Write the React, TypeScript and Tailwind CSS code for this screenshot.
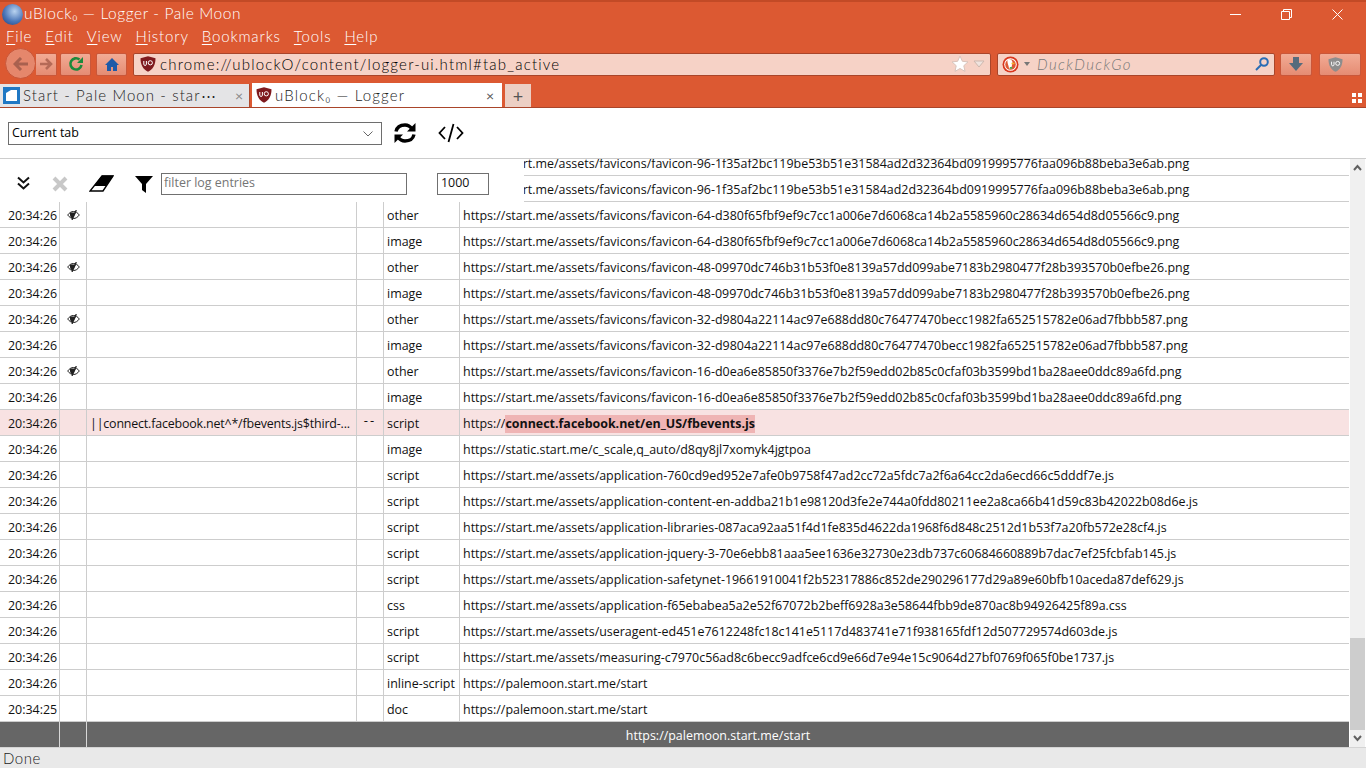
import React from "react";

const uiFont = "font-['Lato','Noto_Sans',sans-serif]";

const rows: [string, boolean, string, string, string][] = [
  ["20:34:26", false, "", "image", "https://start.me/assets/favicons/favicon-96-1f35af2bc119be53b51e31584ad2d32364bd0919995776faa096b88beba3e6ab.png"],
  ["20:34:26", false, "", "image", "https://start.me/assets/favicons/favicon-96-1f35af2bc119be53b51e31584ad2d32364bd0919995776faa096b88beba3e6ab.png"],
  ["20:34:26", true, "", "other", "https://start.me/assets/favicons/favicon-64-d380f65fbf9ef9c7cc1a006e7d6068ca14b2a5585960c28634d654d8d05566c9.png"],
  ["20:34:26", false, "", "image", "https://start.me/assets/favicons/favicon-64-d380f65fbf9ef9c7cc1a006e7d6068ca14b2a5585960c28634d654d8d05566c9.png"],
  ["20:34:26", true, "", "other", "https://start.me/assets/favicons/favicon-48-09970dc746b31b53f0e8139a57dd099abe7183b2980477f28b393570b0efbe26.png"],
  ["20:34:26", false, "", "image", "https://start.me/assets/favicons/favicon-48-09970dc746b31b53f0e8139a57dd099abe7183b2980477f28b393570b0efbe26.png"],
  ["20:34:26", true, "", "other", "https://start.me/assets/favicons/favicon-32-d9804a22114ac97e688dd80c76477470becc1982fa652515782e06ad7fbbb587.png"],
  ["20:34:26", false, "", "image", "https://start.me/assets/favicons/favicon-32-d9804a22114ac97e688dd80c76477470becc1982fa652515782e06ad7fbbb587.png"],
  ["20:34:26", true, "", "other", "https://start.me/assets/favicons/favicon-16-d0ea6e85850f3376e7b2f59edd02b85c0cfaf03b3599bd1ba28aee0ddc89a6fd.png"],
  ["20:34:26", false, "", "image", "https://start.me/assets/favicons/favicon-16-d0ea6e85850f3376e7b2f59edd02b85c0cfaf03b3599bd1ba28aee0ddc89a6fd.png"],
  ["20:34:26", false, "||connect.facebook.net^*/fbevents.js$third-...", "script", "BLOCK"],
  ["20:34:26", false, "", "image", "https://static.start.me/c_scale,q_auto/d8qy8jl7xomyk4jgtpoa"],
  ["20:34:26", false, "", "script", "https://start.me/assets/application-760cd9ed952e7afe0b9758f47ad2cc72a5fdc7a2f6a64cc2da6ecd66c5dddf7e.js"],
  ["20:34:26", false, "", "script", "https://start.me/assets/application-content-en-addba21b1e98120d3fe2e744a0fdd80211ee2a8ca66b41d59c83b42022b08d6e.js"],
  ["20:34:26", false, "", "script", "https://start.me/assets/application-libraries-087aca92aa51f4d1fe835d4622da1968f6d848c2512d1b53f7a20fb572e28cf4.js"],
  ["20:34:26", false, "", "script", "https://start.me/assets/application-jquery-3-70e6ebb81aaa5ee1636e32730e23db737c60684660889b7dac7ef25fcbfab145.js"],
  ["20:34:26", false, "", "script", "https://start.me/assets/application-safetynet-19661910041f2b52317886c852de290296177d29a89e60bfb10aceda87def629.js"],
  ["20:34:26", false, "", "css", "https://start.me/assets/application-f65ebabea5a2e52f67072b2beff6928a3e58644fbb9de870ac8b94926425f89a.css"],
  ["20:34:26", false, "", "script", "https://start.me/assets/useragent-ed451e7612248fc18c141e5117d483741e71f938165fdf12d507729574d603de.js"],
  ["20:34:26", false, "", "script", "https://start.me/assets/measuring-c7970c56ad8c6becc9adfce6cd9e66d7e94e15c9064d27bf0769f065f0be1737.js"],
  ["20:34:26", false, "", "inline-script", "https://palemoon.start.me/start"],
  ["20:34:25", false, "", "doc", "https://palemoon.start.me/start"],
];

function Shield({ size = 16, fill = "#7f1a1e" }: { size?: number; fill?: string }) {
  return (
    <svg width={size} height={size} viewBox="0 0 16 16" className="shrink-0">
      <path d="M8 .3 15.500 2.300C15.500 9 13 13.300 8 15.800 3 13.300.5 9 .5 2.300Z" fill={fill} />
      <path d="M3.800 5v3.200c0 1.700 2.600 1.700 2.600 0V5" fill="none" stroke="#fff" strokeWidth="1" />
      <circle cx="10.300" cy="6.800" r="2.100" fill="none" stroke="#fff" strokeWidth="1" />
    </svg>
  );
}

function Eye() {
  return (
    <svg width="13" height="10" viewBox="0 0 13 10">
      <path d="M.7 5C2.500 2.500 4.500 1.500 6.500 1.500s4 1 5.800 3.500C10.500 7.500 8.500 8.500 6.500 8.500S2.500 7.500.7 5Z" fill="none" stroke="#222" strokeWidth="1" />
      <path d="M3 2.500h6L5.500 8.500C4 8 3 6.500 3 5Z" fill="#222" />
      <path d="M9.300 0 5 10" stroke="#222" strokeWidth="1.300" />
    </svg>
  );
}

function Menu({ label }: { label: string }) {
  return (
    <span>
      <span className="underline underline-offset-2">{label[0]}</span>
      {label.slice(1)}
    </span>
  );
}

function NavButton({ className, children }: { className: string; children: React.ReactNode }) {
  return (
    <div className={`flex h-[23px] items-center justify-center rounded-[2px] border border-[#c9573a] bg-gradient-to-b from-[#f2ab95] to-[#e58c73] ${className}`}>
      {children}
    </div>
  );
}

function LogRow({ r }: { r: (typeof rows)[number] }) {
  const blocked = r[4] === "BLOCK";
  return (
    <div className={`flex h-[26px] shrink-0 items-center border-b border-[#cdcdcd] ${blocked ? "bg-[#f8e2e2]" : ""}`}>
      <div className="flex h-full w-[60px] shrink-0 items-center border-r border-[#cdcdcd] pt-[3px] pl-[8px]">{r[0]}</div>
      <div className="flex h-full w-[27px] shrink-0 items-center justify-center border-r border-[#cdcdcd]">{r[1] && <Eye />}</div>
      <div className="flex h-full w-[270px] shrink-0 items-center border-r border-[#cdcdcd] pt-[3px] pl-[3px] tracking-[-0.18px] whitespace-nowrap">{r[2]}</div>
      <div className="flex h-full w-[27px] shrink-0 items-center justify-center border-r border-[#cdcdcd]">
        {blocked && <span className="-mt-[4px] text-[13px] tracking-[2px]">--</span>}
      </div>
      <div className="flex h-full w-[76px] shrink-0 items-center border-r border-[#cdcdcd] pt-[3px] pl-[3px]">{r[3]}</div>
      <div className="flex h-full min-w-0 flex-1 items-center pt-[3px] pl-[3px] whitespace-nowrap">
        {blocked ? (
          <>
            https://<b className="bg-[#efb4b4] font-bold">connect.facebook.net/en_US/fbevents.js</b>
          </>
        ) : (
          r[4]
        )}
      </div>
    </div>
  );
}

export default function App() {
  return (
    <div className="flex h-[768px] w-[1366px] flex-col overflow-hidden bg-white text-black">
      {/* Browser chrome */}
      <div className={`flex h-[108px] shrink-0 flex-col border-t-2 border-b border-t-[#c24a26] border-b-[#a9452a] bg-[#dc5932] text-white ${uiFont}`}>
        <div className="flex h-[25px] shrink-0 items-center pl-[2px]">
          <div className="h-[21px] w-[21px] rounded-full bg-[radial-gradient(circle_at_60%_35%,#b9d3f0,#4a76b8_55%,#1f3c78)]" />
          <div className="ml-[1px] -mt-[1px] text-[15.5px] tracking-[0.58px] font-light">uBlock₀ — Logger - Pale Moon</div>
          <div className="ml-auto flex items-center">
            <div className="mr-[40px] h-px w-[11px] bg-white" />
            <svg width="11" height="11" viewBox="0 0 11 11" className="mr-[40px]" fill="none" stroke="#fff">
              <path d="M.5 2.500h8v8h-8zM2.500 2.500v-2h8v8h-2" />
            </svg>
            <svg width="11" height="11" viewBox="0 0 11 11" className="mr-[23px]" stroke="#fff"><path d="M.5.5l10 10M10.500.5l-10 10" /></svg>
          </div>
        </div>
        <div className="flex h-[19px] shrink-0 items-center gap-[13px] pl-[6px] text-[15px] tracking-[0.85px] font-light">
          {["File", "Edit", "View", "History", "Bookmarks", "Tools", "Help"].map((m) => (
            <Menu key={m} label={m} />
          ))}
        </div>
        <div className="relative flex h-[36px] shrink-0 items-center pl-[36px] pr-[5px]">
          <div className="absolute top-[2px] left-[5px] flex h-[31px] w-[31px] items-center justify-center rounded-full border border-[#c9573a] bg-[#e5876c]">
            <svg width="16" height="14" viewBox="0 0 16 14"><path d="M8 1 2 7l6 6M2 7h13" fill="none" stroke="#a9614f" strokeWidth="3" /></svg>
          </div>
          <NavButton className="w-[21px] rounded-l-none border-l-0">
            <svg width="14" height="12" viewBox="0 0 14 12"><path d="M7 1l5 5-5 5M12 6H1" fill="none" stroke="#b56a57" strokeWidth="2.600" /></svg>
          </NavButton>
          <NavButton className="ml-[3px] w-[31px]">
            <svg width="16" height="16" viewBox="0 0 16 16" fill="none"><path d="M13.500 9A5.600 5.600 0 1 1 11.500 3.500" stroke="#1c8a3c" strokeWidth="2.600" /><path d="M15 1v6H9Z" fill="#1c8a3c" /></svg>
          </NavButton>
          <NavButton className="ml-[5px] w-[31px]">
            <svg width="16" height="15" viewBox="0 0 16 15"><path d="M8 1 1 8h2v6h4V10h2v4h4V8h2Z" fill="#1e5aa8" /></svg>
          </NavButton>
          <div className="ml-[6px] flex h-[23px] min-w-0 flex-1 items-center rounded-[2px] border border-[#a9452a] bg-[#f6d2c6] pl-[6px] text-[#333]">
            <Shield />
            <span className="ml-[4px] text-[15px] tracking-[1.2px] font-light text-black">chrome://ublockO/content/logger-ui.html#tab_active</span>
            <svg width="18" height="18" viewBox="0 0 18 18" className="ml-auto"><path d="m9 1 2.400 5.300 5.600.6-4.200 3.800 1.200 5.700L9 13.500l-5 2.900 1.200-5.700L1 6.900l5.600-.6Z" fill="#fff" stroke="#d8c4bb" /></svg>
            <svg width="12" height="8" viewBox="0 0 12 8" className="mr-[5px] ml-[4px]"><path d="M1 1h10L6 7Z" fill="#efe3de" stroke="#cdb8ae" /></svg>
          </div>
          <div className="ml-[6px] flex h-[23px] w-[278px] shrink-0 items-center rounded-[2px] border border-[#a9452a] bg-[#f6d2c6] pl-[4px]">
            <svg width="17" height="17" viewBox="0 0 17 17" className="shrink-0">
              <circle cx="8.500" cy="8.500" r="8" fill="#d9361c" />
              <circle cx="8.500" cy="8.500" r="6.300" fill="#fff" />
              <circle cx="8.500" cy="8.500" r="5.300" fill="#de5833" />
              <path d="M5.500 3.500c3-1 5 .5 5 3 0 2-1 3-1 6H7c0-3-2-5-1.500-9Z" fill="#fff" />
              <path d="M9.500 6.800h3.500l-1 1.500H9.500Z" fill="#f5b32b" />
              <path d="M7.800 11h2.400v1.800H7.800Z" fill="#4caf50" />
            </svg>
            <svg width="6" height="4" viewBox="0 0 6 4" className="ml-[5px]"><path d="M0 0h6L3 4Z" fill="#777" /></svg>
            <span className="ml-[7px] text-[15px] italic tracking-[1.4px] font-light text-[#777]">DuckDuckGo</span>
            <svg width="14" height="14" viewBox="0 0 14 14" className="mr-[5px] ml-auto" fill="none" stroke="#2a6db5" strokeWidth="2"><circle cx="9" cy="5" r="3.800" /><path d="M6 8l-5 5" /></svg>
          </div>
          <NavButton className="ml-[5px] w-[32px]">
            <svg width="16" height="16" viewBox="0 0 16 16"><path d="M5 1h6v6h4l-7 8-7-8h4Z" fill="#566b7c" /></svg>
          </NavButton>
          <NavButton className="ml-[7px] w-[42px] justify-start pl-[8px]">
            <Shield size={15} fill="#8d8d8d" />
          </NavButton>
        </div>
        <div className="flex min-h-0 flex-1 items-end pr-[4px]">
          <div className="flex h-[23px] w-[250px] items-center border-r border-[#b04a2c] bg-[#e4e4e6] pl-[3px] text-[#222]">
            <svg width="17" height="17" viewBox="0 0 17 17" className="shrink-0"><path d="M0 0h17v17H0Z" fill="#1f78c4" /><path d="M3 6l5-3h6v11H3Z" fill="#fff" /></svg>
            <span className="ml-[3px] w-[205px] truncate text-[15px] tracking-[1.1px] font-light">Start - Pale Moon - star⋯</span>
            <span className="ml-[7px] text-[14px] text-[#888]">×</span>
          </div>
          <div className="ml-[2px] flex h-[24px] w-[250px] items-center bg-white pl-[4px] text-[#222]">
            <Shield />
            <span className="ml-[3px] text-[15px] tracking-[1.15px] font-light">uBlock₀ — Logger</span>
            <span className="mr-[8px] ml-auto text-[14px] text-[#555]">×</span>
          </div>
          <div className="ml-[3px] flex h-[23px] w-[26px] items-center justify-center bg-[#eccfc4] text-[18px] leading-none text-[#555]">+</div>
          <div className="mb-[4px] ml-auto grid grid-cols-2 gap-[2px]">
            {[0, 1, 2, 3].map((i) => (
              <div key={i} className="h-[4px] w-[4px] bg-white" />
            ))}
          </div>
        </div>
      </div>

      {/* Logger top bar */}
      <div className="flex h-[51px] shrink-0 items-center border-b border-[#cdcdcd] pl-[8px] font-['Open_Sans','Noto_Sans',sans-serif] text-[12.45px]">
        <div className="flex h-[23px] w-[374px] items-center justify-between border border-[#6e6e6e] pt-px pr-[8px] pl-[3px]">
          Current tab
          <svg width="10" height="6" viewBox="0 0 10 6" fill="none" stroke="#666"><path d="m.5.5 4.500 4.500L9.500.5" /></svg>
        </div>
        <svg width="24" height="24" viewBox="0 0 24 24" className="ml-[11px]" fill="none" stroke="#000" strokeWidth="3.400">
          <path d="M3 10.500C4 6 8 4 12 4c3 0 5 1 7 4" />
          <path d="M21 13.500c-1 4.500-5 6.500-9 6.500-3 0-5-1-7-4" />
          <path d="M22.500 2v8.500H14Z" fill="#000" stroke="none" />
          <path d="M1.500 22v-8.500H10Z" fill="#000" stroke="none" />
        </svg>
        <svg width="26" height="20" viewBox="0 0 26 20" className="ml-[21px]" fill="none" stroke="#000" strokeWidth="1.800">
          <path d="M7 4 1.500 10 7 16M19 4l5.500 6L19 16M15.500 1l-5 18" />
        </svg>
      </div>

      {/* Log table */}
      <div className="relative flex min-h-0 flex-1 font-['Open_Sans','Noto_Sans',sans-serif] text-[12.45px] text-[#111]">
        <div className="absolute top-0 left-0 z-10 flex h-[43px] w-[524px] items-center bg-white pt-[6px] pl-[16px]">
          <svg width="15" height="15" viewBox="0 0 15 15" fill="none" stroke="#111" strokeWidth="2"><path d="m2 1.500 5.500 5 5.500-5M2 7.500l5.500 5 5.500-5" /></svg>
          <svg width="16" height="16" viewBox="0 0 16 16" className="ml-[21px]" stroke="#c8c8c8" strokeWidth="4"><path d="m2 2 12 12M14 2 2 14" /></svg>
          <svg width="25" height="17" viewBox="0 0 25 17" className="ml-[21px]">
            <path d="M13 1h11L14 16H1Z" fill="#fff" stroke="#000" strokeWidth="1.400" />
            <path d="M13 .5h11.500L17 11H5Z" fill="#000" />
          </svg>
          <svg width="20" height="20" viewBox="0 0 20 20" className="ml-[20px]"><path d="M1 2h18l-7 8v9l-4-3v-6Z" fill="#000" /></svg>
          <div className="ml-[7px] flex h-[22px] w-[246px] items-center border border-[#707070] pl-[2px] text-[#757575]">filter log entries</div>
          <div className="ml-[30px] flex h-[22px] w-[52px] items-center border border-[#707070] pl-[3px]">1000</div>
        </div>
        <div className="flex min-w-0 flex-1 flex-col overflow-hidden">
          <div className="-mt-[9px] flex flex-col">
            {rows.map((r, i) => (
              <LogRow key={i} r={r} />
            ))}
            <div className="flex h-[26px] shrink-0 items-center bg-[#666666] text-white">
              <div className="h-full w-[60px] shrink-0 border-r border-[#d8d8d8]" />
              <div className="h-full w-[27px] shrink-0 border-r border-[#d8d8d8]" />
              <div className="flex-1 pt-[2px] text-center">https://palemoon.start.me/start</div>
            </div>
          </div>
        </div>
        <div className="mr-px ml-px flex w-[15px] shrink-0 flex-col bg-[#f0f0f0]">
          <div className="flex h-[17px] items-center justify-center">
            <svg width="9" height="7" viewBox="0 0 9 7" fill="none" stroke="#606060" strokeWidth="2"><path d="m1 6 3.500-4L8 6" /></svg>
          </div>
          <div className="flex-1" />
          <div className="h-[92px] bg-[#cdcdcd]" />
          <div className="flex h-[17px] items-center justify-center">
            <svg width="9" height="7" viewBox="0 0 9 7" fill="none" stroke="#606060" strokeWidth="2"><path d="m1 1 3.500 4L8 1" /></svg>
          </div>
        </div>
      </div>

      {/* Status bar */}
      <div className={`flex h-[21px] shrink-0 items-center border-t border-[#d4d4d4] bg-[#e9e9e9] pl-[3px] text-[15px] tracking-[0.5px] font-light text-[#222] ${uiFont}`}>Done</div>
    </div>
  );
}
